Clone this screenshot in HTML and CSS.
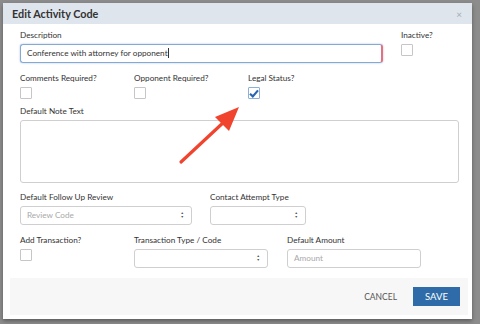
FILE: index.html
```html
<!DOCTYPE html>
<html lang="en">
<head>
    <meta charset="UTF-8">
    <title>Edit Activity Code</title>
    <link rel="stylesheet" href="styles.css">
</head>
<body>
    <div class="modal">
        <div class="modal-header">
            <h4>Edit Activity Code</h4>
            <span class="close">&times;</span>
        </div>

        <div class="modal-body">
            <div class="row r1">
                <div class="field desc">
                    <label>Description</label>
                    <div class="input focus">Conference with attorney for opponent<span class="caret"></span></div>
                </div>
                <div class="field">
                    <label>Inactive?</label>
                    <span class="check"></span>
                </div>
            </div>

            <div class="row r2">
                <div class="field col">
                    <label>Comments Required?</label>
                    <span class="check"></span>
                </div>
                <div class="field col">
                    <label>Opponent Required?</label>
                    <span class="check"></span>
                </div>
                <div class="field col">
                    <label>Legal Status?</label>
                    <span class="check checked">
                        <svg width="10" height="9" viewBox="0 0 10 9"><path d="M1 4.8 L3.8 7.4 L9 1.4" fill="none" stroke="#2b64b0" stroke-width="2.2"/></svg>
                    </span>
                </div>
            </div>

            <div class="row r3">
                <div class="field wide">
                    <label>Default Note Text</label>
                    <div class="textarea"></div>
                </div>
            </div>

            <div class="row r4">
                <div class="field review">
                    <label>Default Follow Up Review</label>
                    <div class="input select placeholder">Review Code<span class="arrows">&#9650;<br>&#9660;</span></div>
                </div>
                <div class="field contact">
                    <label>Contact Attempt Type</label>
                    <div class="input select"><span class="arrows">&#9650;<br>&#9660;</span></div>
                </div>
            </div>

            <div class="row r5">
                <div class="field col">
                    <label>Add Transaction?</label>
                    <span class="check flat"></span>
                </div>
                <div class="field trans">
                    <label>Transaction Type / Code</label>
                    <div class="input select"><span class="arrows">&#9650;<br>&#9660;</span></div>
                </div>
                <div class="field amount">
                    <label>Default Amount</label>
                    <div class="input placeholder">Amount</div>
                </div>
            </div>
        </div>

        <div class="modal-footer">
            <button class="btn-link">CANCEL</button>
            <button class="btn-primary">SAVE</button>
        </div>

        <svg class="pointer" width="70" height="64" viewBox="0 0 70 64">
            <line x1="4" y1="58" x2="48" y2="17" stroke="#f0442e" stroke-width="3.2" stroke-linecap="round"/>
            <polygon points="62,3 52,27 38,13" fill="#f0442e"/>
        </svg>
    </div>
</body>
</html>
```

FILE: styles.css
```css
body {
    margin: 0;
    width: 480px;
    height: 324px;
    overflow: hidden;
    background-color: #8c8c8c;
    font-family: Lato, "Open Sans", "Liberation Sans", sans-serif;
    font-size: 8.2px;
    color: #333;
}

.modal {
    position: relative;
    margin: 3px 0 0 3px;
    width: 469px;
    height: 316px;
    background: #fff;
    box-shadow: 0 2px 4px rgba(0,0,0,0.35);
    display: flex;
    flex-direction: column;
}
.modal-header {
    height: 21px;
    background-color: #dfe5ec;
    display: flex;
    align-items: center;
    justify-content: space-between;
    padding: 0 10px 0 9px;
}
.modal-header h4 {
    margin: 0;
    font-size: 10.8px;
    font-weight: bold;
    color: #333;
}
.close {
    color: #a5adb5;
    font-size: 10px;
}
.modal-body {
    padding: 6px 13px 0 17px;
    flex: 1;
}
.row {
    display: flex;
}
.r1 { margin-bottom: 10px; }
.r2 { margin-bottom: 7px; }
.r3 { margin-bottom: 9px; }
.r4 { margin-bottom: 10px; }

.field label {
    display: block;
    height: 10px;
    line-height: 10px;
    margin: 0 0 4px;
    color: #333;
}
.desc { width: 363px; margin-right: 18px; }
.col { width: 114px; }
.wide { width: 439px; }
.review { width: 172px; margin-right: 18px; }
.contact { width: 96px; }
.trans { width: 134px; margin-right: 19px; }
.amount { width: 134px; }

.check {
    display: flex;
    align-items: center;
    justify-content: center;
    box-sizing: border-box;
    width: 12px;
    height: 12px;
    border: 1px solid #c6c6c6;
    border-radius: 1px;
    margin-top: 2px;
}
.check.flat {
    margin-top: 0;
}
.check.checked {
    border-color: #8fb0d6;
}
.input {
    position: relative;
    box-sizing: border-box;
    height: 19px;
    line-height: 17px;
    border: 1px solid #cfcfcf;
    border-radius: 3px;
    padding: 0 6px;
    color: #333;
}
.input.focus {
    border-color: #84a9d3;
    box-shadow: 0 0 2px rgba(80,130,200,0.5);
    border-right: 2px solid #e5707f;
}
.caret {
    display: inline-block;
    width: 1px;
    height: 10px;
    background: #333;
    vertical-align: -2px;
}
.placeholder {
    color: #a9a9a9;
}
.select .arrows {
    position: absolute;
    right: 7px;
    top: 4px;
    font-size: 3.5px;
    line-height: 4px;
    color: #555;
}
.textarea {
    box-sizing: border-box;
    height: 63px;
    border: 1px solid #cfcfcf;
    border-radius: 3px;
}

.modal-footer {
    margin: 0 4px 4px 7px;
    height: 37px;
    background-color: #f7f7f7;
    display: flex;
    align-items: center;
    justify-content: flex-end;
    padding-right: 8px;
}
.btn-link {
    background: none;
    border: none;
    font-family: inherit;
    font-size: 8.5px;
    color: #555;
    margin-right: 16px;
    padding: 0;
}
.btn-primary {
    background-color: #2f6ba8;
    color: #fff;
    border: none;
    font-family: inherit;
    font-size: 9.5px;
    width: 47px;
    height: 19px;
    padding: 0;
}
.pointer {
    position: absolute;
    left: 174px;
    top: 101px;
}
```
